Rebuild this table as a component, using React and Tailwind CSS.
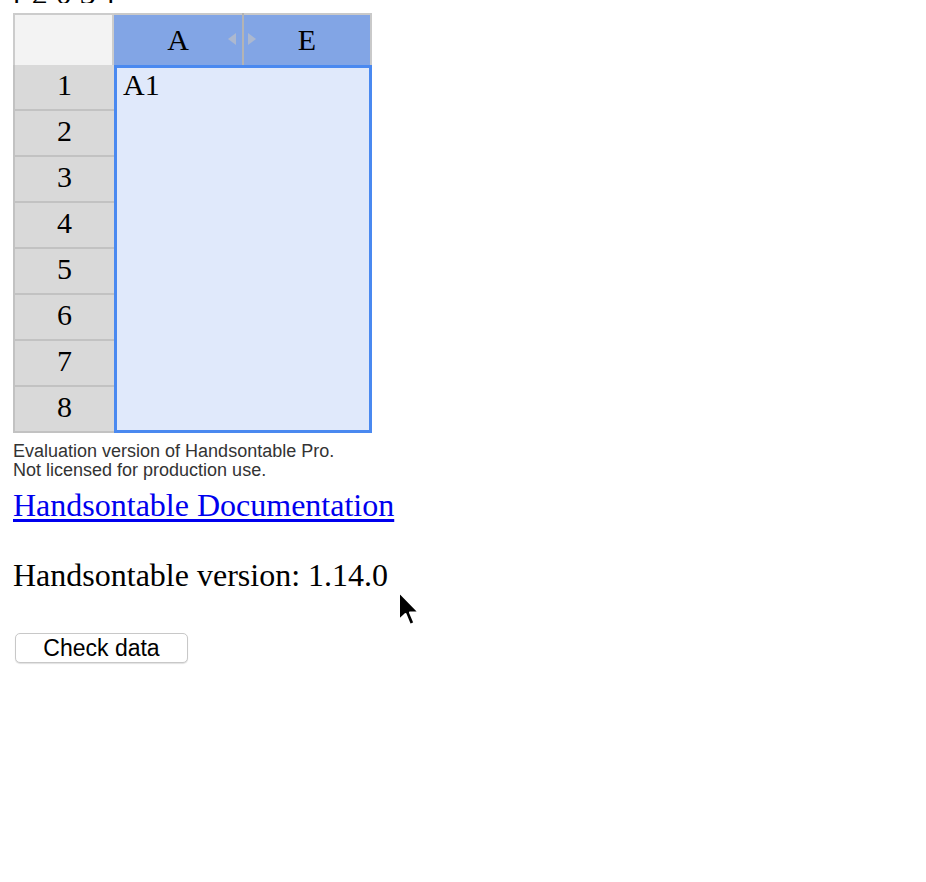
import React from "react";

const rows = [1, 2, 3, 4, 5, 6, 7, 8];

function Cursor() {
  return (
    <svg
      className="absolute left-[396px] top-[590px]"
      width="26"
      height="38"
      viewBox="0 0 26 38"
    >
      <path
        d="M3 2 L3 30 L9.5 24 L14 35 L18.5 33 L14 22.5 L23 22.5 Z"
        fill="#000"
        stroke="#fff"
        strokeWidth="2"
        strokeLinejoin="round"
      />
    </svg>
  );
}

const serif = { fontFamily: '"Liberation Serif", "Times New Roman", serif' };
const sans = { fontFamily: '"Liberation Sans", Arial, sans-serif' };

export default function App() {
  return (
    <div className="relative min-h-[882px] w-[926px] bg-white text-black">
      <div className="h-[3px] overflow-hidden pl-[13px] flex items-end">
        <div className="text-[32px] leading-[20px] whitespace-pre" style={serif}>
          [ 2 0 3 ]
        </div>
      </div>

      <div className="ml-[13px] mt-[10px] w-[359px]" style={serif}>
        {/* header row */}
        <div className="flex h-[52px]">
          <div className="w-[101px] bg-[#f3f3f3] border-t-2 border-l-2 border-r-2 border-[#cccccc]" />
          <div className="relative w-[128px] bg-[#82a5e5] border-t-2 border-[#c9c9c9] flex items-center justify-center text-[30px] leading-[42px]">
            A
            <div className="absolute right-[6px] top-[18px] w-0 h-0 border-y-[6px] border-y-transparent border-r-[8px] border-r-[#acb8cf]" />
          </div>
          <div className="w-[2px] bg-[#b4b4b4]" />
          <div className="relative w-[128px] bg-[#82a5e5] border-t-2 border-r-2 border-[#c9c9c9] flex items-center justify-center text-[30px] leading-[42px]">
            E
            <div className="absolute left-[4px] top-[18px] w-0 h-0 border-y-[6px] border-y-transparent border-l-[8px] border-l-[#acb8cf]" />
          </div>
        </div>
        {/* body */}
        <div className="flex">
          <div className="w-[101px]">
            {rows.map((r) => (
              <div
                key={r}
                className="h-[46px] bg-[#d9d9d9] border-l-2 border-b-2 border-[#c2c2c2] text-center text-[30px] leading-[40px]"
              >
                {r}
              </div>
            ))}
          </div>
          <div className="w-[258px] h-[368px] bg-[#e0e9fb] border-[3px] border-[#4a89f0] pl-[6px] text-[30px] leading-[34px]">
            A1
          </div>
        </div>
      </div>

      <div className="ml-[13px] mt-[9px] text-[18px] leading-[19px] text-[#333333]" style={sans}>
        <div>Evaluation version of Handsontable Pro.</div>
        <div>Not licensed for production use.</div>
      </div>

      <div className="ml-[13px] mt-[7px] text-[32px] leading-[36px]" style={serif}>
        <a href="#" className="text-[#0000ee] underline underline-offset-[3px]">
          Handsontable Documentation
        </a>
        <div className="mt-[34px]">Handsontable version: 1.14.0</div>
      </div>

      <div className="ml-[15px] mt-[40px]">
        <button
          className="w-[173px] h-[30px] bg-white border border-[#c8c8c8] rounded-[5px] shadow-[0_1px_1px_rgba(0,0,0,0.12)] text-[23px] leading-[28px] text-black"
          style={sans}
        >
          Check data
        </button>
      </div>

      <Cursor />
    </div>
  );
}
